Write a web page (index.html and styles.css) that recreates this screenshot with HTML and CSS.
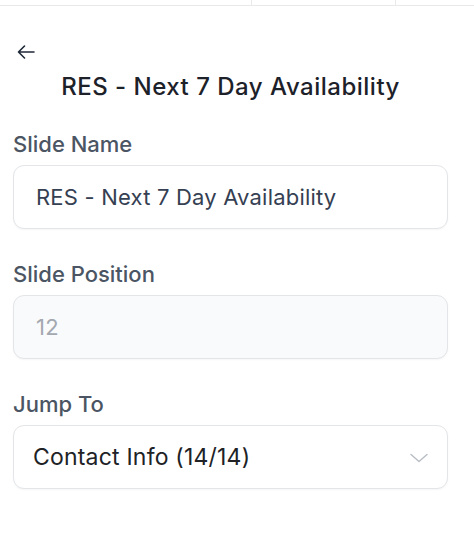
FILE: index.html
```html
<!DOCTYPE html>
<html>
<head>
<meta charset="utf-8">
<link rel="stylesheet" href="styles.css">
</head>
<body>
<div class="tabs">
  <div class="tab tab-a"></div>
  <div class="tab tab-b"></div>
  <div class="tab tab-c"></div>
</div>
<div class="panel">
  <div class="back">
    <svg width="18" height="14" viewBox="0 0 18 14" fill="none" stroke="#1f2937" stroke-width="1.6" stroke-linecap="round" stroke-linejoin="round">
      <path d="M17 7H1.5M7.5 1L1.5 7l6 6"/>
    </svg>
  </div>
  <h1 class="title">RES - Next 7 Day Availability</h1>
  <div class="field">
    <label class="label">Slide Name</label>
    <div class="input">RES - Next 7 Day Availability</div>
  </div>
  <div class="field">
    <label class="label">Slide Position</label>
    <div class="input input-disabled">12</div>
  </div>
  <div class="field">
    <label class="label">Jump To</label>
    <div class="input input-select">
      <span class="select-text">Contact Info (14/14)</span>
      <svg class="chev" width="18" height="10" viewBox="0 0 18 10" fill="none" stroke="#b8bcc3" stroke-width="1.4" stroke-linecap="round" stroke-linejoin="round">
        <path d="M1 1.5l8 7 8-7"/>
      </svg>
    </div>
  </div>
</div>
</body>
</html>
```

FILE: styles.css
```css
* { box-sizing: border-box; }
html, body { margin: 0; padding: 0; background: #fff; }
body {
  font-family: Inter, "Noto Sans", sans-serif;
  width: 474px;
  height: 540px;
  overflow: hidden;
}
.tabs {
  display: flex;
  height: 6px;
  border-bottom: 1px solid #e8e9eb;
}
.tab { height: 100%; }
.tab-a { width: 252px; border-right: 1px solid #e8e9eb; }
.tab-b { width: 144px; border-right: 1px solid #e8e9eb; }
.tab-c { flex: 1; }
.panel {
  padding: 0 26px 0 13px;
}
.back {
  margin-top: 39px;
  padding-left: 4px;
  height: 14px;
  display: flex;
}
.title {
  margin: 13px 0 0;
  text-align: center;
  font-size: 24px;
  font-weight: 500;
  letter-spacing: 0.5px;
  color: #1d2129;
  line-height: 30px;
}
.field { margin-top: 29px; }
.field + .field { margin-top: 32px; }
.label {
  display: block;
  font-size: 22px;
  font-weight: 500;
  color: #4b5563;
  line-height: 26px;
  margin-bottom: 8px;
}
.input {
  height: 64px;
  border: 1px solid #e3e5e8;
  border-radius: 11px;
  padding: 0 22px;
  display: flex;
  align-items: center;
  font-size: 22px;
  letter-spacing: 0.2px;
  color: #354052;
  background: #fff;
  box-shadow: 0 1px 2px rgba(0,0,0,0.04);
}
.input-disabled {
  background: #f9fafb;
  color: #a3a8b0;
}
.input-select {
  justify-content: space-between;
  padding: 0 19px 0 19px;
  color: #202226;
  font-size: 23px;
}
.chev { margin-top: 2px; }
```
